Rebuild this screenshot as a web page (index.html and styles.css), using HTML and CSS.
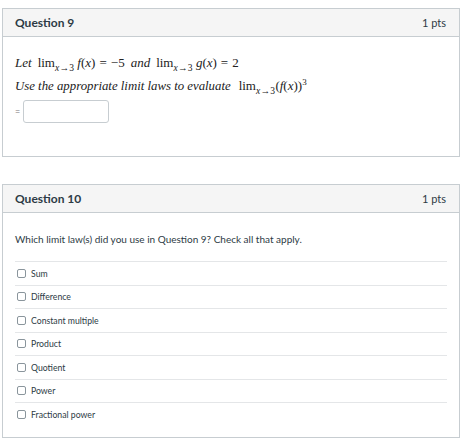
FILE: index.html
```html
<!DOCTYPE html>
<html>
<head>
<meta charset="utf-8">
<link rel="stylesheet" href="styles.css">
</head>
<body>
<div class="page">
  <section class="card">
    <header class="card-head">
      <span class="q-name">Question 9</span>
      <span class="q-pts">1 pts</span>
    </header>
    <div class="card-body q9">
      <div class="math-line"><span class="mi w-let">Let</span><span class="mo lim">lim</span><sub class="msub"><span class="mi">x</span>→3</sub><span class="mi fn">f</span>(<span class="mi">x</span>)<span class="rel">=</span>−5<span class="mi w-and">and</span><span class="mo lim">lim</span><sub class="msub"><span class="mi">x</span>→3</sub><span class="mi fn">g</span>(<span class="mi">x</span>)<span class="rel">=</span>2</div>
      <div class="math-line"><span class="mi w-text">Use the appropriate limit laws to evaluate</span><span class="mo lim">lim</span><sub class="msub"><span class="mi">x</span>→3</sub>(<span class="mi">f</span>(<span class="mi">x</span>))<sup class="msup">3</sup></div>
      <div class="answer-row">
        <span class="eq">=</span>
        <span class="answer-box"></span>
      </div>
    </div>
  </section>

  <section class="card">
    <header class="card-head">
      <span class="q-name">Question 10</span>
      <span class="q-pts">1 pts</span>
    </header>
    <div class="card-body q10">
      <p class="q-text">Which limit law(s) did you use in Question 9? Check all that apply.</p>
      <ul class="options">
        <li class="option"><span class="cbox"></span><span class="opt-label">Sum</span></li>
        <li class="option"><span class="cbox"></span><span class="opt-label">Difference</span></li>
        <li class="option"><span class="cbox"></span><span class="opt-label">Constant multiple</span></li>
        <li class="option"><span class="cbox"></span><span class="opt-label">Product</span></li>
        <li class="option"><span class="cbox"></span><span class="opt-label">Quotient</span></li>
        <li class="option"><span class="cbox"></span><span class="opt-label">Power</span></li>
        <li class="option"><span class="cbox"></span><span class="opt-label">Fractional power</span></li>
      </ul>
    </div>
  </section>
</div>
</body>
</html>
```

FILE: styles.css
```css
* { box-sizing: border-box; }
html, body { margin: 0; padding: 0; background: #fff; }
body { font-family: Lato, "Liberation Sans", sans-serif; color: #2d3b45; }

.page {
  padding: 8px 0 0 2px;
  width: 460px;
  display: flex;
  flex-direction: column;
  gap: 27px;
}

.card {
  border: 1px solid #c7cdd1;
  background: #fff;
}

.card-head {
  height: 28px;
  background: #f5f5f5;
  border-bottom: 1px solid #c7cdd1;
  display: flex;
  align-items: center;
  justify-content: space-between;
  padding: 0 13px 0 12px;
}

.q-name { font-weight: 700; font-size: 12px; }
.q-pts { font-size: 11px; color: #2d3b45; }

.card-body { padding: 0 12px; }

.q9 { padding-top: 14px; padding-bottom: 33px; }

.math-line {
  font-family: "Liberation Serif", "DejaVu Serif", serif;
  font-size: 13px;
  line-height: 23px;
  height: 23px;
  color: #222;
  white-space: nowrap;
}
.mi { font-style: italic; }
.mo { font-style: normal; }
.w-let { margin-right: 6px; }
.w-and { margin: 0 6px 0 6px; }
.w-text { font-size: 12.8px; margin-right: 8px; }
.fn { margin-left: 3px; }
.rel { margin: 0 4px; }
.msub { font-size: 9.5px; vertical-align: -4px; line-height: 0; letter-spacing: 0.3px; }
.msup { font-size: 9px; vertical-align: 5px; line-height: 0; }

.answer-row {
  margin-top: 3px;
  display: flex;
  align-items: center;
  gap: 3px;
}
.eq { font-size: 9px; color: #777; width: 5px; }
.answer-box {
  display: block;
  width: 86px;
  height: 23px;
  border: 1px solid #c7cdd1;
  border-radius: 3px;
  background: #fff;
}

.q10 { padding-top: 18px; padding-bottom: 11px; }
.q-text {
  margin: 0 0 14px;
  font-size: 10px;
  line-height: 16px;
  height: 16px;
}
.options { list-style: none; margin: 0; padding: 0; }
.option {
  height: 23.5px;
  border-top: 1px solid #e4e6e8;
  display: flex;
  align-items: center;
  padding-left: 2px;
  gap: 5px;
}
.cbox {
  width: 9px;
  height: 9px;
  border: 1px solid #8a959c;
  border-radius: 2px;
  background: #fff;
}
.opt-label { font-size: 8.7px; }
```
